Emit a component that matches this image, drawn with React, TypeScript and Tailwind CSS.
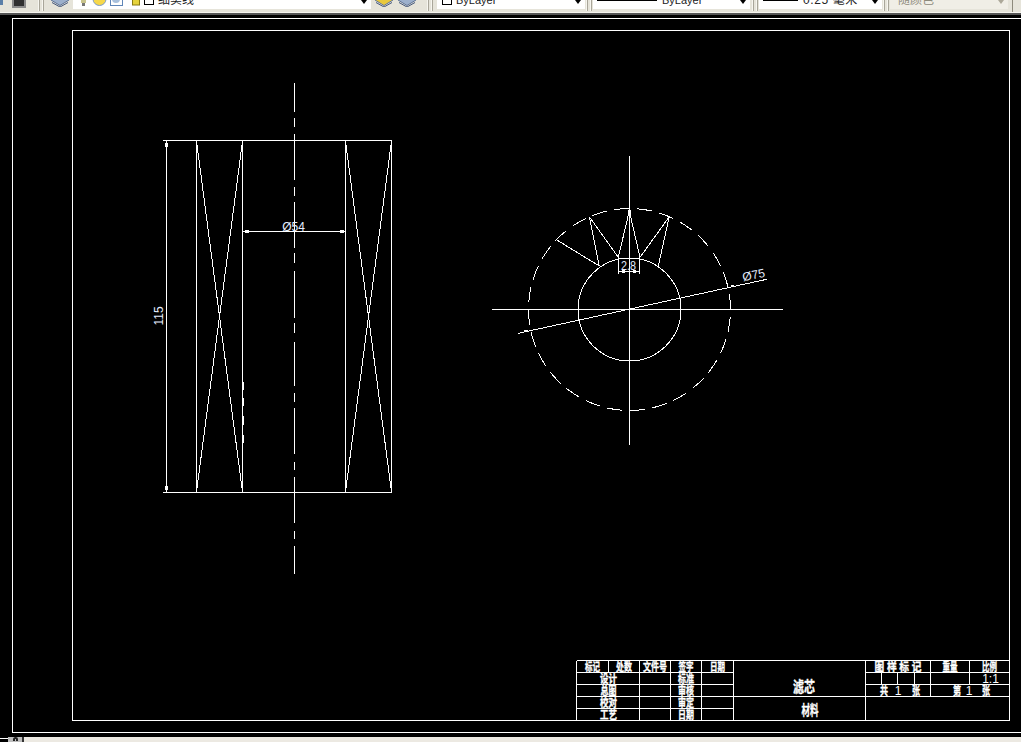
// App.tsx
import React from 'react';

const CJK = "font-['Liberation_Sans','Noto_Sans_CJK_SC',sans-serif]";

// dashes of the centre line on the side view, [from, to] in y
const centerDashes = [
  [83, 112], [118, 127], [134, 180], [187, 196], [202, 248], [253, 263], [271, 318], [323, 333],
  [342, 386], [393, 402], [408, 454], [462, 470], [477, 523], [531, 539], [546, 574],
];

const polar = (deg: number, r: number) => {
  const a = (deg * Math.PI) / 180;
  return `${(629.5 + r * Math.cos(a)).toFixed(2)} ${(309.5 + r * Math.sin(a)).toFixed(2)}`;
};

// hidden-line circle: 28 dashes going counter-clockwise from the bottom
const outerDashes = Array.from({ length: 28 }, (_, i) => {
  const start = 90 - i * (360 / 28);
  return `M${polar(start, 101)} A101 101 0 0 0 ${polar(start - 8.7, 101)}`;
});

const titleLines = [
  'M576.5 660.5H1009.5', 'M576.5 672.5H733.5', 'M576.5 684.5H733.5', 'M576.5 696.5H733.5', 'M576.5 708.5H733.5',
  'M865.5 672.5H1009.5', 'M865.5 684.5H1009.5', 'M733.5 696.5H1009.5',
  'M576.5 660.5V720.5', 'M608.5 660.5V672.5', 'M639.5 660.5V720.5', 'M670.5 660.5V720.5', 'M701.5 660.5V720.5', 'M733.5 660.5V720.5',
  'M865.5 660.5V720.5', 'M881.5 672.5V684.5', 'M897.5 672.5V684.5', 'M914.5 672.5V684.5', 'M930.5 660.5V696.5', 'M969.5 660.5V684.5',
];

// text, centre x, baseline y, width
const titleTexts: [string, number, number, number][] = [
  ['标记', 592.5, 671, 15], ['处数', 624, 671, 16], ['文件号', 655, 671, 24], ['签字', 686, 671, 15], ['日期', 717.5, 671, 15],
  ['设计', 608.5, 683, 17], ['标准', 686, 683, 16],
  ['总图', 608.5, 695, 16], ['审核', 686, 695, 16],
  ['校对', 608.5, 707, 17], ['审定', 686, 707, 16],
  ['工艺', 608.5, 719, 17], ['日期', 686, 719, 16],
  ['图 样 标 记', 898, 671, 47], ['重量', 950, 671, 15], ['比例', 989.5, 671, 15],
  ['共', 884, 695, 8], ['张', 916, 695, 8], ['第', 957, 695, 8], ['张', 986, 695, 8],
];

const Dropdown: React.FC<{ className: string; children?: React.ReactNode; muted?: boolean }> = ({ className, children, muted }) => (
  <div className={`flex h-[9px] shrink-0 items-start justify-between overflow-hidden ${className}`}>
    <div className="flex min-w-0 items-start">{children}</div>
    <span className={`mr-[4px] mt-0 h-0 w-0 border-x-[3px] border-t-[4px] border-x-transparent ${muted ? 'border-t-[#aca899]' : 'border-t-black'}`} />
  </div>
);

const Grip: React.FC<{ className: string }> = ({ className }) => (
  <div className={`flex h-[11px] shrink-0 justify-center gap-[2px] ${className}`}>
    <div className="h-full w-[2px] border-r border-r-[#a9a69a] bg-[#f7f6f0]" />
    <div className="h-full w-[2px] border-r border-r-[#a9a69a] bg-[#f7f6f0]" />
  </div>
);

const LayerIcon = ({ accent }: { accent: string }) => (
  <svg width="18" height="7" viewBox="0 0 18 7" className="shrink-0">
    <path d="M0 0L9 5.5L18 0" fill={accent} stroke="#5f7396" />
    <path d="M1 2.5L9 7L17 2.5" fill="none" stroke="#42557a" />
  </svg>
);

const Toolbar = () => (
  <div className="flex h-[15px] shrink-0 flex-col bg-[#e6e4da]">
    <div className="flex h-[12px] items-start overflow-hidden text-[11px] leading-[12px] text-[#222]">
      <div className="flex h-[9px] w-[36px] shrink-0 items-start">
        <span className="h-[5px] w-[3px] bg-[#5b7fa8]" />
        <span className="ml-[9px] h-[8px] w-[14px] border-2 border-t-0 border-[#8b8b8b] bg-[#303030]" />
      </div>
      <Grip className="w-[9px]" />
      <div className="flex w-[28px] shrink-0 justify-center pl-[2px]"><LayerIcon accent="#9db0cc" /></div>
      <Dropdown className="w-[298px] bg-white">
        <svg width="85" height="9" viewBox="0 0 85 9" className="shrink-0">
          <rect x="8" y="0" width="5" height="3" fill="#c9c48c" />
          <rect x="9" y="3" width="3" height="3" fill="#777" />
          <circle cx="26.5" cy="-1" r="6.5" fill="#f7d84a" stroke="#7d9bc4" />
          <rect x="37.5" y="-3" width="12" height="8.5" fill="#fff" stroke="#5f86b8" />
          <circle cx="43" cy="-1" r="4" fill="#a8c0dc" />
          <rect x="59.5" y="-2" width="7" height="7" fill="#e6d33c" stroke="#8a7a10" />
          <rect x="71.5" y="-3" width="9" height="7.5" fill="#fff" stroke="#000" />
        </svg>
        <span className={`-mt-[6px] whitespace-nowrap text-[12px] ${CJK}`}>细实线</span>
      </Dropdown>
      <div className="flex w-[52px] shrink-0 items-start gap-[5px] pl-[4px]">
        <LayerIcon accent="#e8c83c" />
        <LayerIcon accent="#9db0cc" />
      </div>
      <Grip className="w-[14px]" />
      <Dropdown className="w-[148px] bg-white">
        <span className="ml-[5px] mt-0 h-[5px] w-[10px] border border-t-0 border-black bg-white" />
        <span className={`-mt-[6px] ml-[4px] whitespace-nowrap ${CJK}`}>ByLayer</span>
      </Dropdown>
      <Grip className="w-[8px]" />
      <Dropdown className="w-[157px] bg-white">
        <span className="ml-[4px] h-px w-[60px] bg-black" />
        <span className={`-mt-[6px] ml-[5px] whitespace-nowrap ${CJK}`}>ByLayer</span>
      </Dropdown>
      <Grip className="w-[9px]" />
      <Dropdown className="w-[123px] bg-white">
        <span className="ml-[4px] h-px w-[35px] bg-black" />
        <span className={`-mt-[6px] ml-[5px] whitespace-nowrap text-[12px] tracking-[0.6px] ${CJK}`}>0.25 毫米</span>
      </Dropdown>
      <Grip className="w-[8px]" />
      <Dropdown muted className="w-[118px] bg-[#f0eee6]">
        <span className={`-mt-[6px] ml-[8px] whitespace-nowrap text-[12px] text-[#8d8a7c] ${CJK}`}>随颜色</span>
      </Dropdown>
      <div className="ml-[4px] h-full w-px shrink-0 bg-[#8d8a7c]" />
    </div>
    <div className="h-px bg-[#f7f6f0]" />
    <div className="h-[2px] bg-[#555]" />
  </div>
);

const Drawing = () => (
  <svg width="1021" height="722" viewBox="0 15 1021 722" className="block" fill="none" shapeRendering="crispEdges">
    <g stroke="#fff" strokeWidth="1">
      {/* sheet + frame */}
      <path d="M1021 18.5H12.5V732.5H1021" />
      <rect x="72.5" y="30.5" width="937" height="690" />

      {/* side view */}
      <path d="M163 140.5H391.5V492.5H163M166.5 140.5V492.5M196.5 140.5V492.5M242.5 140.5V492.5M345.5 140.5V492.5" />
      {centerDashes.map(([a, b]) => <path key={a} d={`M294.5 ${a}V${b}`} />)}
      <path d="M243.5 382V390M243.5 398V406M243.5 416V425M243.5 435V443" />
      <path d="M243 231.5H345" />
      <path d="M196.5 141L242.5 492M242.5 141L196.5 492M345.5 141L391.5 492M391.5 141L345.5 492" />
    </g>
    <g fill="#fff">
      <rect x="165" y="143" width="3" height="4" />
      <rect x="165" y="486" width="3" height="4" />
      <rect x="245" y="230" width="4" height="3" />
      <rect x="340" y="230" width="4" height="3" />
    </g>

    {/* front view */}
    <g stroke="#fff" strokeWidth="1">
      <path d="M629.5 156V445M492 309.5H783" />
      <circle cx="629.5" cy="309.5" r="51.5" />
      {outerDashes.map(d => <path key={d} d={d} />)}
      <path d="M555.7 239.3L599.3 266M589.3 216.7L599.3 266M589.3 216.7L618.3 257.3M629.3 211L618.3 257.3M629.3 211L640 257.3M669.3 216.7L640 257.3M669.3 216.7L658.3 266" />
      <path d="M518.3 333.3L766.7 279.3" />
      <path d="M618.5 257V274M639.5 257V274M618.5 271H639.5" />
    </g>
    <g fill="#fff">
      <rect x="622" y="270" width="3" height="3" />
      <rect x="633" y="270" width="3" height="3" />
      <rect x="628" y="210" width="3" height="4" />
      <rect x="731" y="285" width="3" height="2" />
      <rect x="524" y="330" width="4" height="2" />
    </g>

    {/* dimensions */}
    <g fill="#e6eeff" className="font-['Liberation_Sans',sans-serif] text-[12px]" textAnchor="middle" shapeRendering="auto">
      <text x="293.5" y="231">Ø54</text>
      <text x="628.5" y="270" textLength="15" lengthAdjust="spacingAndGlyphs">2.8</text>
      <text x="754" y="279" transform="rotate(-11 754 277)">Ø75</text>
      <text x="159" y="316" transform="rotate(-90 159 316)" dy="4">115</text>
    </g>

    {/* title block */}
    <g stroke="#fff" strokeWidth="1">
      {titleLines.map((d, i) => <path key={i} d={d} />)}
    </g>
    <g fill="#fff" stroke="#fff" strokeWidth="0.35" textAnchor="middle" className={`${CJK} text-[11px] font-bold`}>
      {titleTexts.map(([t, x, y, w], i) => (
        <text key={i} x={x} y={y} textLength={w} lengthAdjust="spacingAndGlyphs">{t}</text>
      ))}
      <text x="804" y="692" textLength="22" lengthAdjust="spacingAndGlyphs" className="text-[15px]">滤芯</text>
      <text x="810" y="715" textLength="17" lengthAdjust="spacingAndGlyphs" className="text-[14px]">材料</text>
    </g>
    <g fill="#fff" textAnchor="middle" className="font-['Liberation_Sans',sans-serif] text-[12px]">
      <text x="990.5" y="683">1:1</text>
      <text x="898" y="695">1</text>
      <text x="969" y="695">1</text>
    </g>
  </svg>
);

export default function App() {
  return (
    <div className="flex h-[742px] w-[1021px] flex-col overflow-hidden bg-black">
      <Toolbar />
      <div className="min-h-0 flex-1">
        <Drawing />
      </div>
      <div className="flex h-[5px] shrink-0 items-stretch bg-[#ece9e2]">
        <div className="w-[8px] bg-black pt-px">
          <div className="h-px bg-white" />
        </div>
        <div className="flex w-[14px] justify-center bg-[#bdbdbd]">
          <span className="h-[4px] w-[5px] rounded-t-full border-2 border-b-0 border-[#222]" />
        </div>
        <div className="w-[2px] bg-[#333]" />
      </div>
    </div>
  );
}
